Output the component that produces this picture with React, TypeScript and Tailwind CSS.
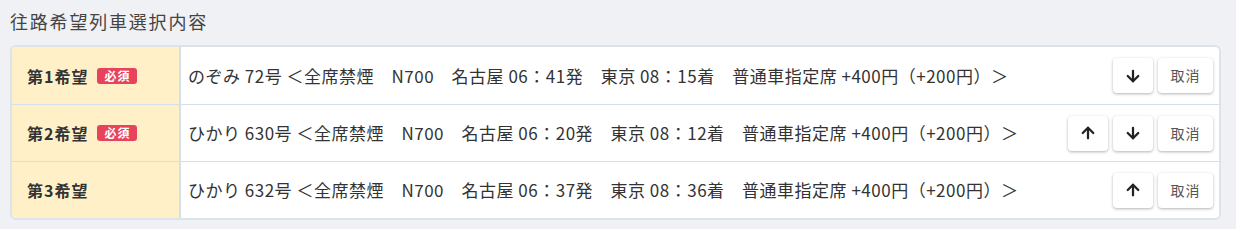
import { ArrowDown, ArrowUp } from 'lucide-react';

type Choice = {
    label: string;
    required: boolean;
    text: string;
    up: boolean;
    down: boolean;
};

const choices: Choice[] = [
    {
        label: '第1希望',
        required: true,
        text: 'のぞみ 72号 ＜全席禁煙　N700　名古屋 06：41発　東京 08：15着　普通車指定席 +400円（+200円）＞',
        up: false,
        down: true,
    },
    {
        label: '第2希望',
        required: true,
        text: 'ひかり 630号 ＜全席禁煙　N700　名古屋 06：20発　東京 08：12着　普通車指定席 +400円（+200円）＞',
        up: true,
        down: true,
    },
    {
        label: '第3希望',
        required: false,
        text: 'ひかり 632号 ＜全席禁煙　N700　名古屋 06：37発　東京 08：36着　普通車指定席 +400円（+200円）＞',
        up: true,
        down: false,
    },
];

const btn =
    'h-[35px] flex items-center justify-center bg-white rounded-[4px] shadow-[0_1px_3px_rgba(0,0,0,0.3)]';

export default function App() {
    return (
        <div
            className="w-[1236px] h-[229px] bg-[#f0f1f5] pt-[8px] px-[10px]"
            style={{ fontFamily: '"Noto Sans CJK JP", "Noto Sans", sans-serif' }}
        >
            <h1 className="text-[18px] leading-[26px] text-[#444] tracking-[1.8px]">往路希望列車選択内容</h1>

            <div className="mt-[11px] w-[1211px] border-2 border-[#dde3ea] rounded-[6px] overflow-hidden bg-white">
                {choices.map((c, i) => (
                    <div
                        key={c.label}
                        className={`flex h-[57px] ${i > 0 ? 'border-t border-[#d3e0ea]' : ''}`}
                    >
                        {/* Label */}
                        <div className="w-[169px] shrink-0 bg-[#fff0c8] border-r-2 border-[#d3e0ea] flex items-center pl-[15px] gap-[9px]">
                            <span className="text-[16px] font-bold text-[#333] tracking-[1px]">{c.label}</span>
                            {c.required && (
                                <span className="bg-[#e8435c] text-white text-[12px] font-bold leading-[16px] px-[7px] rounded-[3px] tracking-[1px]">
                                    必須
                                </span>
                            )}
                        </div>

                        {/* Train */}
                        <div className="flex-1 flex items-center pl-[7px] pr-[6px]">
                            <span className="flex-1 text-[17px] text-[#333] whitespace-nowrap tracking-[0.5px]">{c.text}</span>
                            <div className="flex gap-[5px]">
                                {c.up && (
                                    <button className={`${btn} w-[40px] text-[#222]`}>
                                        <ArrowUp size={18} strokeWidth={3} />
                                    </button>
                                )}
                                {c.down && (
                                    <button className={`${btn} w-[40px] text-[#222]`}>
                                        <ArrowDown size={18} strokeWidth={3} />
                                    </button>
                                )}
                                <button className={`${btn} w-[55px] text-[14px] text-[#555] tracking-[1px]`}>取消</button>
                            </div>
                        </div>
                    </div>
                ))}
            </div>
        </div>
    );
}
